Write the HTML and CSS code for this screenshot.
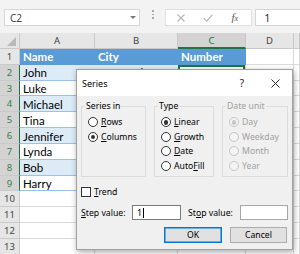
FILE: index.html
```html
<!DOCTYPE html>
<html>
<head>
<meta charset="utf-8">
<link rel="stylesheet" href="styles.css">
</head>
<body>
<div class="app">
  <div class="fbar">
    <div class="namebox"><span class="nb-text">C2</span><span class="nb-arrow"></span></div>
    <div class="grip"><i></i><i></i><i></i></div>
    <div class="fbtns">
      <svg class="ic-x" width="8" height="8" viewBox="0 0 8 8"><path d="M0.5 0.5L7.5 7.5M7.5 0.5L0.5 7.5" stroke="#b5b5b5" stroke-width="1.1" fill="none"/></svg>
      <svg class="ic-check" width="10" height="8" viewBox="0 0 10 8"><path d="M0.7 4.2L3.6 7.2L9.4 0.6" stroke="#b5b5b5" stroke-width="1.1" fill="none"/></svg>
      <span class="ic-fx">f<span class="fx-x">x</span></span>
    </div>
    <div class="finput">1</div>
  </div>

  <div class="sheet">
    <div class="corner"><span class="tri"></span></div><div class="ch">A</div><div class="ch">B</div><div class="ch sel">C</div><div class="ch">D</div><div class="ch"></div>

    <div class="rh">1</div><div class="c th">Name</div><div class="c th">City</div><div class="c th">Number</div><div class="c"></div><div class="c"></div>
    <div class="rh sel">2</div><div class="c b1">John</div><div class="c b1">New York</div><div class="c active"></div><div class="c"></div><div class="c"></div>
    <div class="rh sel">3</div><div class="c b0">Luke</div><div class="c b0"></div><div class="c b0"></div><div class="c"></div><div class="c"></div>
    <div class="rh sel">4</div><div class="c b1">Michael</div><div class="c b1"></div><div class="c b1"></div><div class="c"></div><div class="c"></div>
    <div class="rh sel">5</div><div class="c b0">Tina</div><div class="c b0"></div><div class="c b0"></div><div class="c"></div><div class="c"></div>
    <div class="rh sel">6</div><div class="c b1">Jennifer</div><div class="c b1"></div><div class="c b1"></div><div class="c"></div><div class="c"></div>
    <div class="rh sel">7</div><div class="c b0">Lynda</div><div class="c b0"></div><div class="c b0"></div><div class="c"></div><div class="c"></div>
    <div class="rh sel">8</div><div class="c b1">Bob</div><div class="c b1"></div><div class="c b1"></div><div class="c"></div><div class="c"></div>
    <div class="rh sel">9</div><div class="c b0">Harry</div><div class="c b0"></div><div class="c b0"></div><div class="c"></div><div class="c"></div>
    <div class="rh">10</div><div class="c"></div><div class="c"></div><div class="c"></div><div class="c"></div><div class="c"></div>
    <div class="rh">11</div><div class="c"></div><div class="c"></div><div class="c"></div><div class="c"></div><div class="c"></div>
    <div class="rh">12</div><div class="c"></div><div class="c"></div><div class="c"></div><div class="c"></div><div class="c"></div>
    <div class="rh">13</div><div class="c"></div><div class="c"></div><div class="c"></div><div class="c"></div><div class="c"></div>
  </div>

  <div class="dialog">
    <div class="dlg-title">
      <span class="dlg-name">Series</span>
      <span class="dlg-help">?</span>
      <svg class="dlg-close" width="9" height="9" viewBox="0 0 9 9"><path d="M0.5 0.5L8.5 8.5M8.5 0.5L0.5 8.5" stroke="#222" stroke-width="1" fill="none"/></svg>
    </div>
    <div class="dlg-body">
      <div class="groups">
        <fieldset class="grp g-series">
          <legend>Series in</legend>
          <div class="opt"><span class="radio"></span><span><u>R</u>ows</span></div>
          <div class="opt"><span class="radio on"></span><span><u>C</u>olumns</span></div>
        </fieldset>
        <fieldset class="grp g-type">
          <legend>Type</legend>
          <div class="opt"><span class="radio on"></span><span><u>L</u>inear</span></div>
          <div class="opt"><span class="radio"></span><span><u>G</u>rowth</span></div>
          <div class="opt"><span class="radio"></span><span><u>D</u>ate</span></div>
          <div class="opt"><span class="radio"></span><span>Auto<u>F</u>ill</span></div>
        </fieldset>
        <fieldset class="grp g-date dis">
          <legend>Date unit</legend>
          <div class="opt"><span class="radio on"></span><span>Day</span></div>
          <div class="opt"><span class="radio"></span><span>Weekday</span></div>
          <div class="opt"><span class="radio"></span><span>Month</span></div>
          <div class="opt"><span class="radio"></span><span>Year</span></div>
        </fieldset>
      </div>
      <div class="trend"><span class="checkbox"></span><span><u>T</u>rend</span></div>
      <div class="steps">
        <span class="step-l"><u>S</u>tep value:</span>
        <div class="field step">1<span class="caret"></span></div>
        <span class="stop-l">St<u>o</u>p value:</span>
        <div class="field stop"></div>
      </div>
      <div class="actions">
        <button class="btn ok">OK</button>
        <button class="btn cancel">Cancel</button>
      </div>
    </div>
  </div>
</div>
</body>
</html>
```

FILE: styles.css
```css
html, body {
  margin: 0;
  padding: 0;
}
body {
  width: 300px;
  height: 254px;
  overflow: hidden;
  background: #fff;
  font-family: "Noto Sans", "DejaVu Sans", sans-serif;
}
.app {
  position: relative;
  width: 300px;
  height: 254px;
  overflow: hidden;
}

/* formula bar */
.fbar {
  height: 33px;
  box-sizing: border-box;
  background: #f3f3f3;
  display: flex;
  align-items: flex-start;
  padding-top: 9px;
}
.namebox {
  margin-left: 4px;
  width: 136px;
  height: 17px;
  box-sizing: border-box;
  background: #fff;
  border: 1px solid #d6d6d6;
  display: flex;
  align-items: center;
  justify-content: space-between;
  padding: 0 3px 0 5px;
}
.nb-text {
  font-size: 10px;
  color: #444;
  line-height: 1;
}
.nb-arrow {
  width: 0;
  height: 0;
  border-left: 3px solid transparent;
  border-right: 3px solid transparent;
  border-top: 3px solid #7a7a7a;
}
.grip {
  margin-left: 12px;
  padding-top: 1px;
  display: flex;
  flex-direction: column;
  gap: 2px;
}
.grip i {
  display: block;
  width: 1.5px;
  height: 1.5px;
  background: #a8a8a8;
}
.fbtns {
  margin-left: 11px;
  width: 87px;
  height: 17px;
  box-sizing: border-box;
  background: #fff;
  border: 1px solid #e0e0e0;
  display: flex;
  align-items: center;
}
.ic-x {
  margin-left: 11px;
}
.ic-check {
  margin-left: 18px;
}
.ic-fx {
  margin-left: 19px;
  font-family: "Liberation Serif", serif;
  font-style: italic;
  font-size: 11px;
  color: #555;
  line-height: 1;
}
.fx-x {
  font-size: 8px;
}
.finput {
  margin-left: 3px;
  flex: 1;
  height: 17px;
  box-sizing: border-box;
  background: #fff;
  border: 1px solid #d6d6d6;
  border-right: none;
  padding-left: 9px;
  font-size: 10px;
  color: #222;
  display: flex;
  align-items: center;
}

/* sheet */
.sheet {
  display: grid;
  grid-template-columns: 20px 75px 83px 68px 48px 1fr;
  grid-template-rows: 16px;
  grid-auto-rows: 15.83px;
}
.sheet > div {
  box-sizing: border-box;
  border-right: 1px solid #dadada;
  border-bottom: 1px solid #dadada;
  overflow: hidden;
  white-space: nowrap;
}
.corner, .ch, .rh {
  background: #e6e6e6;
  color: #444;
  font-size: 9.5px;
  display: flex;
  align-items: center;
  justify-content: center;
}
.sheet > .corner, .sheet > .ch, .sheet > .rh {
  border-color: #c9c9c9;
}
.corner {
  position: relative;
}
.tri {
  position: absolute;
  right: 3px;
  bottom: 2px;
  width: 0;
  height: 0;
  border-left: 9px solid transparent;
  border-bottom: 9px solid #b9b9b9;
}
.sheet > .ch.sel {
  background: #d3d3d3;
  color: #217346;
  border-bottom: 2px solid #217346;
}
.sheet > .rh.sel {
  background: #d3d3d3;
  color: #3b7a52;
  border-right: 1px solid #217346;
}
.c {
  font-family: Lato, "Liberation Sans", sans-serif;
  font-size: 11.5px;
  color: #000;
  display: flex;
  align-items: center;
  padding: 1px 0 0 3px;
}
.sheet > .c.th {
  background: #5b9bd5;
  color: #fff;
  font-weight: bold;
  border-right-color: #5b9bd5;
  border-bottom-color: #5b9bd5;
}
.sheet > .c.b1 {
  background: #ddebf7;
  border-right-color: #ddebf7;
  border-bottom-color: #9bc2e6;
}
.sheet > .c.b0 {
  background: #fff;
  border-right-color: #fff;
  border-bottom-color: #9bc2e6;
}
.sheet > .c.active {
  background: #fff;
  border-bottom-color: #9bc2e6;
  box-shadow: inset 2px 2px 0 #217346, inset -2px 0 0 #217346;
}

/* dialog */
.dialog {
  position: absolute;
  left: 76px;
  top: 69px;
  width: 217px;
  height: 181px;
  box-sizing: border-box;
  border: 1px solid #a0a0a0;
  background: #f0f0f0;
  box-shadow: 1px 2px 6px rgba(0, 0, 0, 0.35);
  font-size: 8.7px;
  color: #000;
  display: flex;
  flex-direction: column;
}
.dlg-title {
  height: 26px;
  flex-shrink: 0;
  background: #fff;
  display: flex;
  align-items: center;
}
.dlg-name {
  margin-left: 5px;
  font-size: 9px;
}
.dlg-help {
  margin-left: auto;
  font-size: 10px;
  color: #222;
}
.dlg-close {
  margin-left: 27px;
  margin-right: 12px;
}
.dlg-body {
  flex: 1;
  padding: 4px 4px 0 4px;
  display: flex;
  flex-direction: column;
}
.groups {
  display: flex;
  gap: 8px;
  height: 77px;
}
.grp {
  margin: 0;
  padding: 3px 0 0 6px;
  border: 1px solid #dcdcdc;
  box-sizing: border-box;
  min-width: 0;
}
.g-series { width: 65px; }
.g-type { width: 60px; }
.g-date { width: 66px; }
.grp legend {
  padding: 0 1px;
  margin-left: -3px;
  line-height: 12px;
  font-size: 8.7px;
}
.opt {
  display: flex;
  align-items: center;
  height: 14.6px;
  white-space: nowrap;
}
.radio {
  width: 10px;
  height: 10px;
  box-sizing: border-box;
  border: 1px solid #333;
  border-radius: 50%;
  background: #fff;
  margin-right: 3px;
  flex-shrink: 0;
  display: flex;
  align-items: center;
  justify-content: center;
}
.radio.on::after {
  content: "";
  width: 4.5px;
  height: 4.5px;
  border-radius: 50%;
  background: #333;
}
.dis, .dis legend {
  color: #a0a0a0;
}
.dis .radio {
  border-color: #c6c6c6;
  background: #f4f4f4;
}
.dis .radio.on::after {
  background: #c6c6c6;
}
.trend {
  margin-top: 9px;
  height: 12px;
  display: flex;
  align-items: center;
}
.checkbox {
  width: 10px;
  height: 10px;
  box-sizing: border-box;
  border: 1px solid #333;
  background: #fff;
  margin-right: 3px;
}
.steps {
  margin-top: 7px;
  height: 15px;
  display: flex;
  align-items: center;
}
.step-l {
  width: 51px;
  flex-shrink: 0;
}
.field {
  height: 15px;
  box-sizing: border-box;
  background: #fff;
  border: 1px solid #7a7a7a;
  display: flex;
  align-items: center;
  padding-left: 4px;
  font-size: 9px;
}
.field.step {
  width: 49px;
}
.field.stop {
  width: 48px;
  border-color: #a8a8a8;
}
.caret {
  display: inline-block;
  width: 1px;
  height: 10px;
  background: #000;
  margin-left: 1px;
}
.stop-l {
  margin-left: 7px;
  width: 52px;
  flex-shrink: 0;
}
.actions {
  margin-top: 7px;
  display: flex;
  justify-content: flex-end;
  gap: 8px;
  padding-right: 1px;
}
.btn {
  height: 16px;
  box-sizing: border-box;
  background: #e1e1e1;
  border: 1px solid #adadad;
  font: inherit;
  color: #000;
  padding: 0;
  margin: 0;
}
.btn.ok {
  width: 58px;
  border-color: #0078d7;
  box-shadow: inset 0 0 0 0.5px #0078d7;
}
.btn.cancel {
  width: 57px;
}
```
